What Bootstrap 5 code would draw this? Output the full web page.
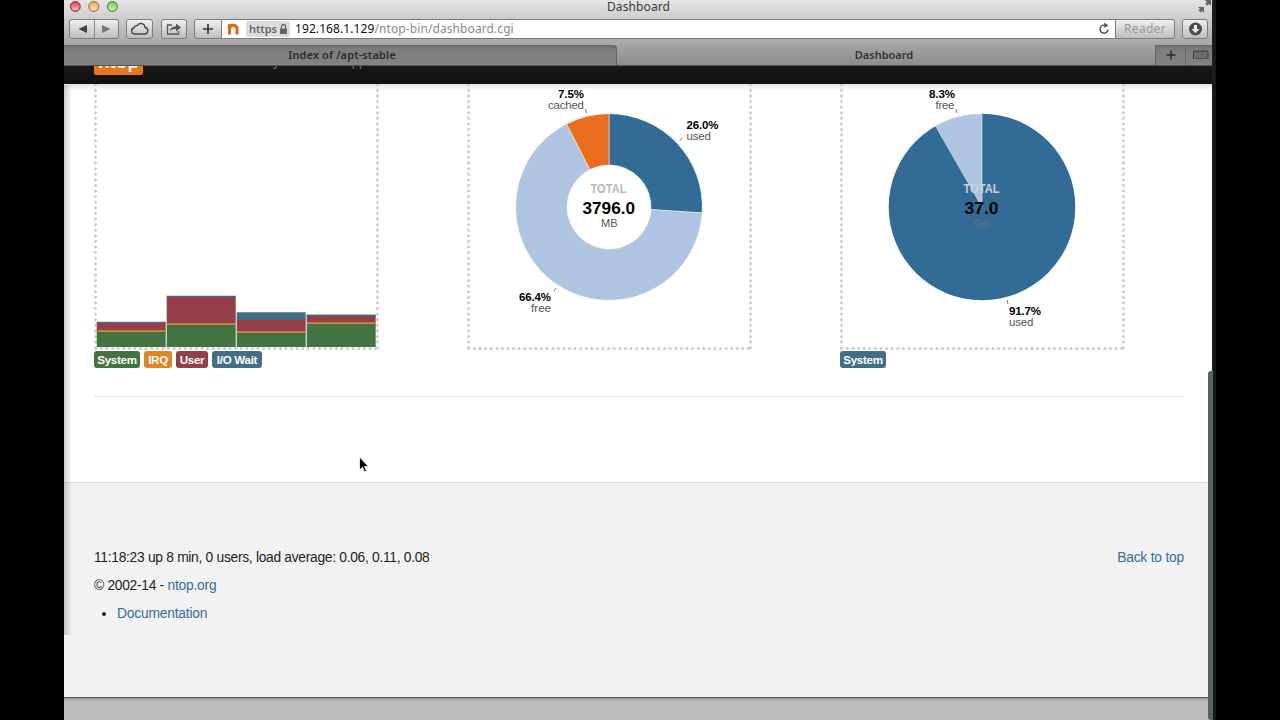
<!DOCTYPE html>
<html lang="en">
<head>
<meta charset="utf-8">
<title>Dashboard</title>
<link href="https://cdn.jsdelivr.net/npm/bootstrap@5.3.0/dist/css/bootstrap.min.css" rel="stylesheet">
<style>
body{background:#000;font-family:"Liberation Sans",Arial,sans-serif;font-size:14px;line-height:20px;color:#222}
svg{display:block;flex:none}
.screen{width:1280px;height:720px;padding-left:64px}
.win{width:1148px;background:#fff}
.edge{width:4px;background:linear-gradient(90deg,#2a1733 0 1px,#0f1f14 1px)}
.chrome-ui{font-family:"Noto Sans","Open Sans",sans-serif}
.titlebar{height:18px;background:linear-gradient(#e4e4e4,#cecece);color:#3a3a3a}
.win-title{font-size:12px;line-height:14px;padding-left:1px;letter-spacing:.1px}
.lights{left:5px;top:0}
.full{right:1px;top:0}
.toolbar{height:27px;background:linear-gradient(#cdcdcd,#a6a6a6);padding:1px 4px 0 5px}
.tb{height:20px;border:1px solid #7b7b7b;border-radius:3px;background:linear-gradient(#f0f0f0,#bdbdbd);padding:0}
.addr{height:20px;border:1px solid #777;border-width:1px 0;background:#fff;font-size:12px}
.https{background:#dcdcdc;border-radius:2px;font-size:11px;font-weight:600;color:#666;height:16px;width:44px;letter-spacing:-.1px;padding:0 2px 0 3px}
.url{color:#111;font-size:12px;letter-spacing:.09px;margin-left:5px}
.url span{color:#8a8a8a}
.reader{width:60px;color:#999;font-size:12px;line-height:18px;border-radius:0 3px 3px 0;letter-spacing:.3px}
.tabs{height:21px;background:linear-gradient(#a2a2a2,#8d8d8d);font-size:11px;line-height:19px;font-weight:600;color:#333;border-bottom:1px solid #555}
.tab-off{background:linear-gradient(#6f6f6f,#7d7d7d 3px,#828282);border-top:1px solid #666;border-right:1px solid #666;color:#2c2c2c;line-height:18px}
.tab-main{border-top-right-radius:4px;letter-spacing:.1px;padding-left:4px}
.topnav{height:18px;background:linear-gradient(#181818,#111)}
.logo{left:30px;top:0;width:49px;height:9px;background:#e8761c;border-radius:0 0 2px 2px;overflow:hidden;color:#fff;font-weight:700;font-size:19px;text-align:center;line-height:20px}
.logo span{display:block;margin-top:-14px}
.ghost{left:209px;top:0;height:4px;width:100px;overflow:hidden;color:#777;font-size:13px}
.ghost span{display:block;margin-top:-14px}
.page{height:398px;padding:0 28px 0 30px;background:linear-gradient(#e4e4e4,#fff 7px)}
.shade{background:linear-gradient(90deg,rgba(0,0,0,.2),transparent);width:8px;left:0;top:85px;height:550px}
.charts{gap:88px}
.plot{width:285px;height:266px;
background:radial-gradient(circle at 1.5px 2.8px,#ccc 1.3px,transparent 1.7px) 0 -2px/3px 5.6px repeat-y,
radial-gradient(circle at 1.5px 2.8px,#ccc 1.3px,transparent 1.7px) 100% -2px/3px 5.6px repeat-y,
radial-gradient(circle at 2.8px 1.5px,#ccc 1.3px,transparent 1.7px) -1px 100%/5.6px 3px repeat-x}
.tags{gap:4px;margin-top:1px}
.tag{height:17px;line-height:17px;border-radius:3px;color:#fff;font-weight:700;font-size:11.6px;letter-spacing:-.3px;text-align:center;white-space:nowrap}
.rule{height:1px;background:#e9e9e9;margin-top:28px}
.foot{height:215px;background:#f2f2f2;border-top:1px solid #dcdcdc;padding:65px 28px 0 30px}
.foot p,.foot li{font-size:13.8px;line-height:20px;margin:0 0 8px;letter-spacing:-.29px}
.foot ul{padding-left:23px}
.foot a{color:#326e9b;text-decoration:none;letter-spacing:-.2px}
.desk{height:23px;background:linear-gradient(#555 0 1px,#999 1px,#bdbdbd 4px)}
.scroll{width:5px;background:#606060;border-radius:3px 0 0 3px;right:-1px;top:371px;height:349px}
.ptr{left:294px;top:456px}
</style>
</head>
<body>
<div class="screen d-flex overflow-hidden">
<main class="win position-relative d-flex flex-column">
  <header class="chrome-ui">
    <div class="titlebar position-relative text-center">
      <svg class="lights position-absolute" width="52" height="14" stroke-width="1">
        <defs><linearGradient id="gl" x2="0" y2="1"><stop offset="0" stop-color="#fff" stop-opacity=".05"/><stop offset="1" stop-color="#fff" stop-opacity=".7"/></linearGradient></defs>
        <g><circle cx="6.3" cy="6.5" r="5" fill="#dc4552" stroke="#8c3a42"/><circle cx="24.8" cy="6.5" r="5" fill="#e8a83f" stroke="#94703a"/><circle cx="43.4" cy="6.5" r="5" fill="#78c552" stroke="#55823f"/></g>
        <g fill="url(#gl)"><circle cx="6.3" cy="6.5" r="4"/><circle cx="24.8" cy="6.5" r="4"/><circle cx="43.4" cy="6.5" r="4"/></g>
      </svg>
      <div class="win-title">Dashboard</div>
      <svg class="full position-absolute" width="13" height="14" fill="#666"><path d="M6.500 0H13v6l-2-2-1.800 1.800-2-2L9 2zM0 7h6v6l-2-2-1.500 1.500-2-2L2 9z"/></svg>
    </div>
    <div class="toolbar d-flex">
      <div class="tb d-flex" style="width:50px">
        <svg width="48" height="18"><path d="M8.500 9l8.500-4v8z" fill="#444"/><path d="M24.500 0v18" stroke="#888"/><path d="M32 5l8.500 4-8.500 4z" fill="#777"/></svg>
      </div>
      <div class="tb" style="width:27px;margin-left:7px"><svg width="25" height="18" fill="none" stroke="#444" stroke-width="1.4"><path d="M7.500 14a3.200 3.200 0 0 1-.4-6.300 2.500 2.500 0 0 1 3-2 4.300 4.300 0 0 1 8 1.800A3.300 3.300 0 0 1 18 14z"/></svg></div>
      <div class="tb" style="width:26px;margin-left:8px"><svg width="24" height="18" fill="none" stroke="#555" stroke-width="1.3"><path d="M10 5H5.500v9h11v-3"/><path d="M8 11.500c0-3 2-5 6-5V3.500l5 4-5 4V9c-3 0-5 .5-6 2.500z" fill="#555" stroke="none"/></svg></div>
      <div class="tb" style="width:28px;margin-left:7px;border-radius:3px 0 0 3px"><svg width="26" height="18"><path d="M13 4v10M8 9h10" stroke="#333" stroke-width="1.6"/></svg></div>
      <div class="addr flex-grow-1 d-flex align-items-center">
        <svg width="24" height="18"><path d="M7.500 14.500V4M7.500 8.500c0-4.200 7.500-4.200 7.500 0v6" fill="none" stroke="#e06a1b" stroke-width="3.2"/></svg>
        <div class="https d-flex align-items-center justify-content-between"><span>https</span><svg width="9" height="12"><path d="M2.500 6V3.500a2 2 0 0 1 4 0V6" fill="none" stroke="#666" stroke-width="1.3"/><path d="M1 5.500h7V11H1z" fill="#666"/></svg></div>
        <div class="url">192.168.1.129<span>/ntop-bin/dashboard.cgi</span></div>
        <svg class="ms-auto me-1" width="14" height="14"><path d="M9 3.700A4 4 0 1 0 11 7.500" fill="none" stroke="#555" stroke-width="1.500"/><path d="M7 .5l4.500 3L7.500 6z" fill="#555"/></svg>
      </div>
      <div class="tb reader text-center">Reader</div>
      <div class="tb" style="width:26px;margin-left:7px"><svg width="24" height="18"><circle cx="12.500" cy="9" r="6.500" fill="#4c4c4c"/><path d="M11 5h3v4h2.500l-4 4.200-4-4.200H11z" fill="#eee"/></svg></div>
    </div>
    <div class="tabs d-flex text-center">
      <div class="tab-off tab-main" style="width:553px"><span>Index of /apt-stable</span></div>
      <div class="flex-grow-1" style="padding-right:4px"><span>Dashboard</span></div>
      <div class="tab-off" style="width:31px;border-left:1px solid #666"><svg class="mx-auto" width="10" height="19"><path d="M5 4.500v9M.5 9h9" stroke="#2c2c2c" stroke-width="1.500"/></svg></div>
      <div class="tab-off" style="width:26px;border-right:0"><svg width="24" height="19"><path d="M8 5h14v8H8z" fill="#6c6c6c"/><path d="M7.500 13V5h14.500v8" stroke="#3d3d3d" fill="none"/><path d="M10 12.500h11" stroke="#333" stroke-dasharray="1 1"/></svg></div>
    </div>
  </header>
  <nav class="topnav position-relative">
    <div class="logo position-absolute"><span>ntop</span></div>
    <div class="ghost position-absolute"><span>y&nbsp; &nbsp; &nbsp; &nbsp; &nbsp; &nbsp; &nbsp; &nbsp; &nbsp; &nbsp; pp</span></div>
  </nav>
  <section class="page">
    <div class="charts d-flex">
      <div>
        <div class="plot">
          <svg width="285" height="266" viewBox="94 84 285 266">
            <g fill="#437343"><path d="M96.700 331h69v16h-69zM166.700 324h69v23h-69zM236.700 332h69v15h-69zM306.700 323h69v24h-69z"/></g>
            <g fill="#953f4b"><path d="M96.700 322h69v9h-69zM166.700 296h69v28h-69zM236.700 319h69v13h-69zM306.700 315h69v8h-69z"/></g>
            <g fill="#d08a3c"><path d="M96.700 330.300h69v1.600h-69zM166.700 323.300h69v1.600h-69zM236.700 331.300h69v1.600h-69zM306.700 322.300h69v1.600h-69z"/></g>
            <g fill="#436f86"><path d="M96.700 321.800h69v1.200h-69zM166.700 295.700h69v1.200h-69zM236.700 312.300h69v7.400h-69zM306.700 314.500h69v1.400h-69z"/></g>
          </svg>
        </div>
        <div class="tags d-flex">
          <span class="tag" style="width:46px;background:#437343">System</span><span class="tag" style="width:28px;background:#de8722">IRQ</span><span class="tag" style="width:32px;background:#953f4b">User</span><span class="tag" style="width:50px;background:#436f86">I/O Wait</span>
        </div>
      </div>
      <div class="plot">
        <svg width="285" height="266" viewBox="-142 -123 285 266" font-size="11.5" fill="#555">
          <g stroke="#fff" stroke-opacity=".6" stroke-width=".8">
            <path fill="#326c96" d="M0-93.300A93.300 93.300 0 0 1 93.100 5.900L42 2.600A42 42 0 0 0 0-42z"/>
            <path fill="#aec4e1" d="M93.100 5.900A93.300 93.300 0 1 1-42.400-83.100L-19.100-37.400A42 42 0 1 0 42 2.600z"/>
            <path fill="#ea6d1d" d="M-42.400-83.100A93.300 93.300 0 0 1 0-93.300V-42A42 42 0 0 0-19.100-37.400z"/>
          </g>
          <path d="M-23.500-98l1 4M70.500-66l3-3M-53 81l-2 3" stroke="#777"/>
          <g font-weight="700" fill="#000"><text x="-51" y="-109" textLength="26">7.5%</text><text x="77.500" y="-78" textLength="32">26.0%</text><text x="-90" y="94" textLength="32">66.4%</text></g>
          <text x="-61" y="-98" textLength="36">cached</text><text x="77.500" y="-67" textLength="24.500">used</text><text x="-78" y="105" textLength="20">free</text>
          <text x="-18.500" y="-14.500" font-weight="700" font-size="12" fill="#b9b9b9" textLength="36" lengthAdjust="spacingAndGlyphs">TOTAL</text>
          <text x="-26.500" y="7" font-weight="700" font-size="17" fill="#000" textLength="52.500" lengthAdjust="spacingAndGlyphs">3796.0</text>
          <text x="-8" y="20" textLength="16.500" lengthAdjust="spacingAndGlyphs">MB</text>
        </svg>
      </div>
      <div>
        <div class="plot">
          <svg width="285" height="266" viewBox="-142 -123 285 266" font-size="11.5" fill="#555">
            <circle r="93.300" fill="#326c96"/>
            <path fill="#aec4e1" stroke="#fff" stroke-opacity=".6" stroke-width=".8" d="M0 0L-46.500-80.900A93.300 93.300 0 0 1 0-93.300z"/>
            <path d="M-26-98l1 4M25 93l1 4" stroke="#777"/>
            <g font-weight="700" fill="#000"><text x="-53" y="-109" textLength="26">8.3%</text><text x="27" y="108" textLength="32">91.7%</text></g>
            <text x="-46.500" y="-98" textLength="19">free</text><text x="27" y="119" textLength="24.500">used</text>
            <text x="-18.500" y="-14.500" font-weight="700" font-size="12" fill="#cdd2d8" textLength="36" lengthAdjust="spacingAndGlyphs">TOTAL</text>
            <text x="-17.500" y="7" font-weight="700" font-size="17" fill="#000" textLength="34" lengthAdjust="spacingAndGlyphs">37.0</text>
            <text x="-8" y="20" fill="#686c72" textLength="16" lengthAdjust="spacingAndGlyphs">GB</text>
          </svg>
        </div>
        <div class="tags d-flex"><span class="tag" style="width:46px;background:#436f86">System</span></div>
      </div>
    </div>
    <div class="rule"></div>
  </section>
  <footer class="foot">
    <div class="d-flex justify-content-between"><p>11:18:23 up 8 min, 0 users, load average: 0.06, 0.11, 0.08</p><p><a href="#">Back to top</a></p></div>
    <p>© 2002-14 - <a href="#">ntop.org</a></p>
    <ul><li><a href="#">Documentation</a></li></ul>
  </footer>
  <div class="desk"></div>
  <div class="shade position-absolute"></div>
  <div class="scroll position-absolute"></div>
  <svg class="ptr position-absolute" width="14" height="18"><path d="M1.500 1v13l3-2.800 2 4.800 2-.9-2-4.600h4z" fill="#000" stroke="#fff" stroke-width=".8"/></svg>
</main>
<div class="edge"></div>
</div>
<script src="https://cdn.jsdelivr.net/npm/bootstrap@5.3.0/dist/js/bootstrap.bundle.min.js"></script>
</body>
</html>
